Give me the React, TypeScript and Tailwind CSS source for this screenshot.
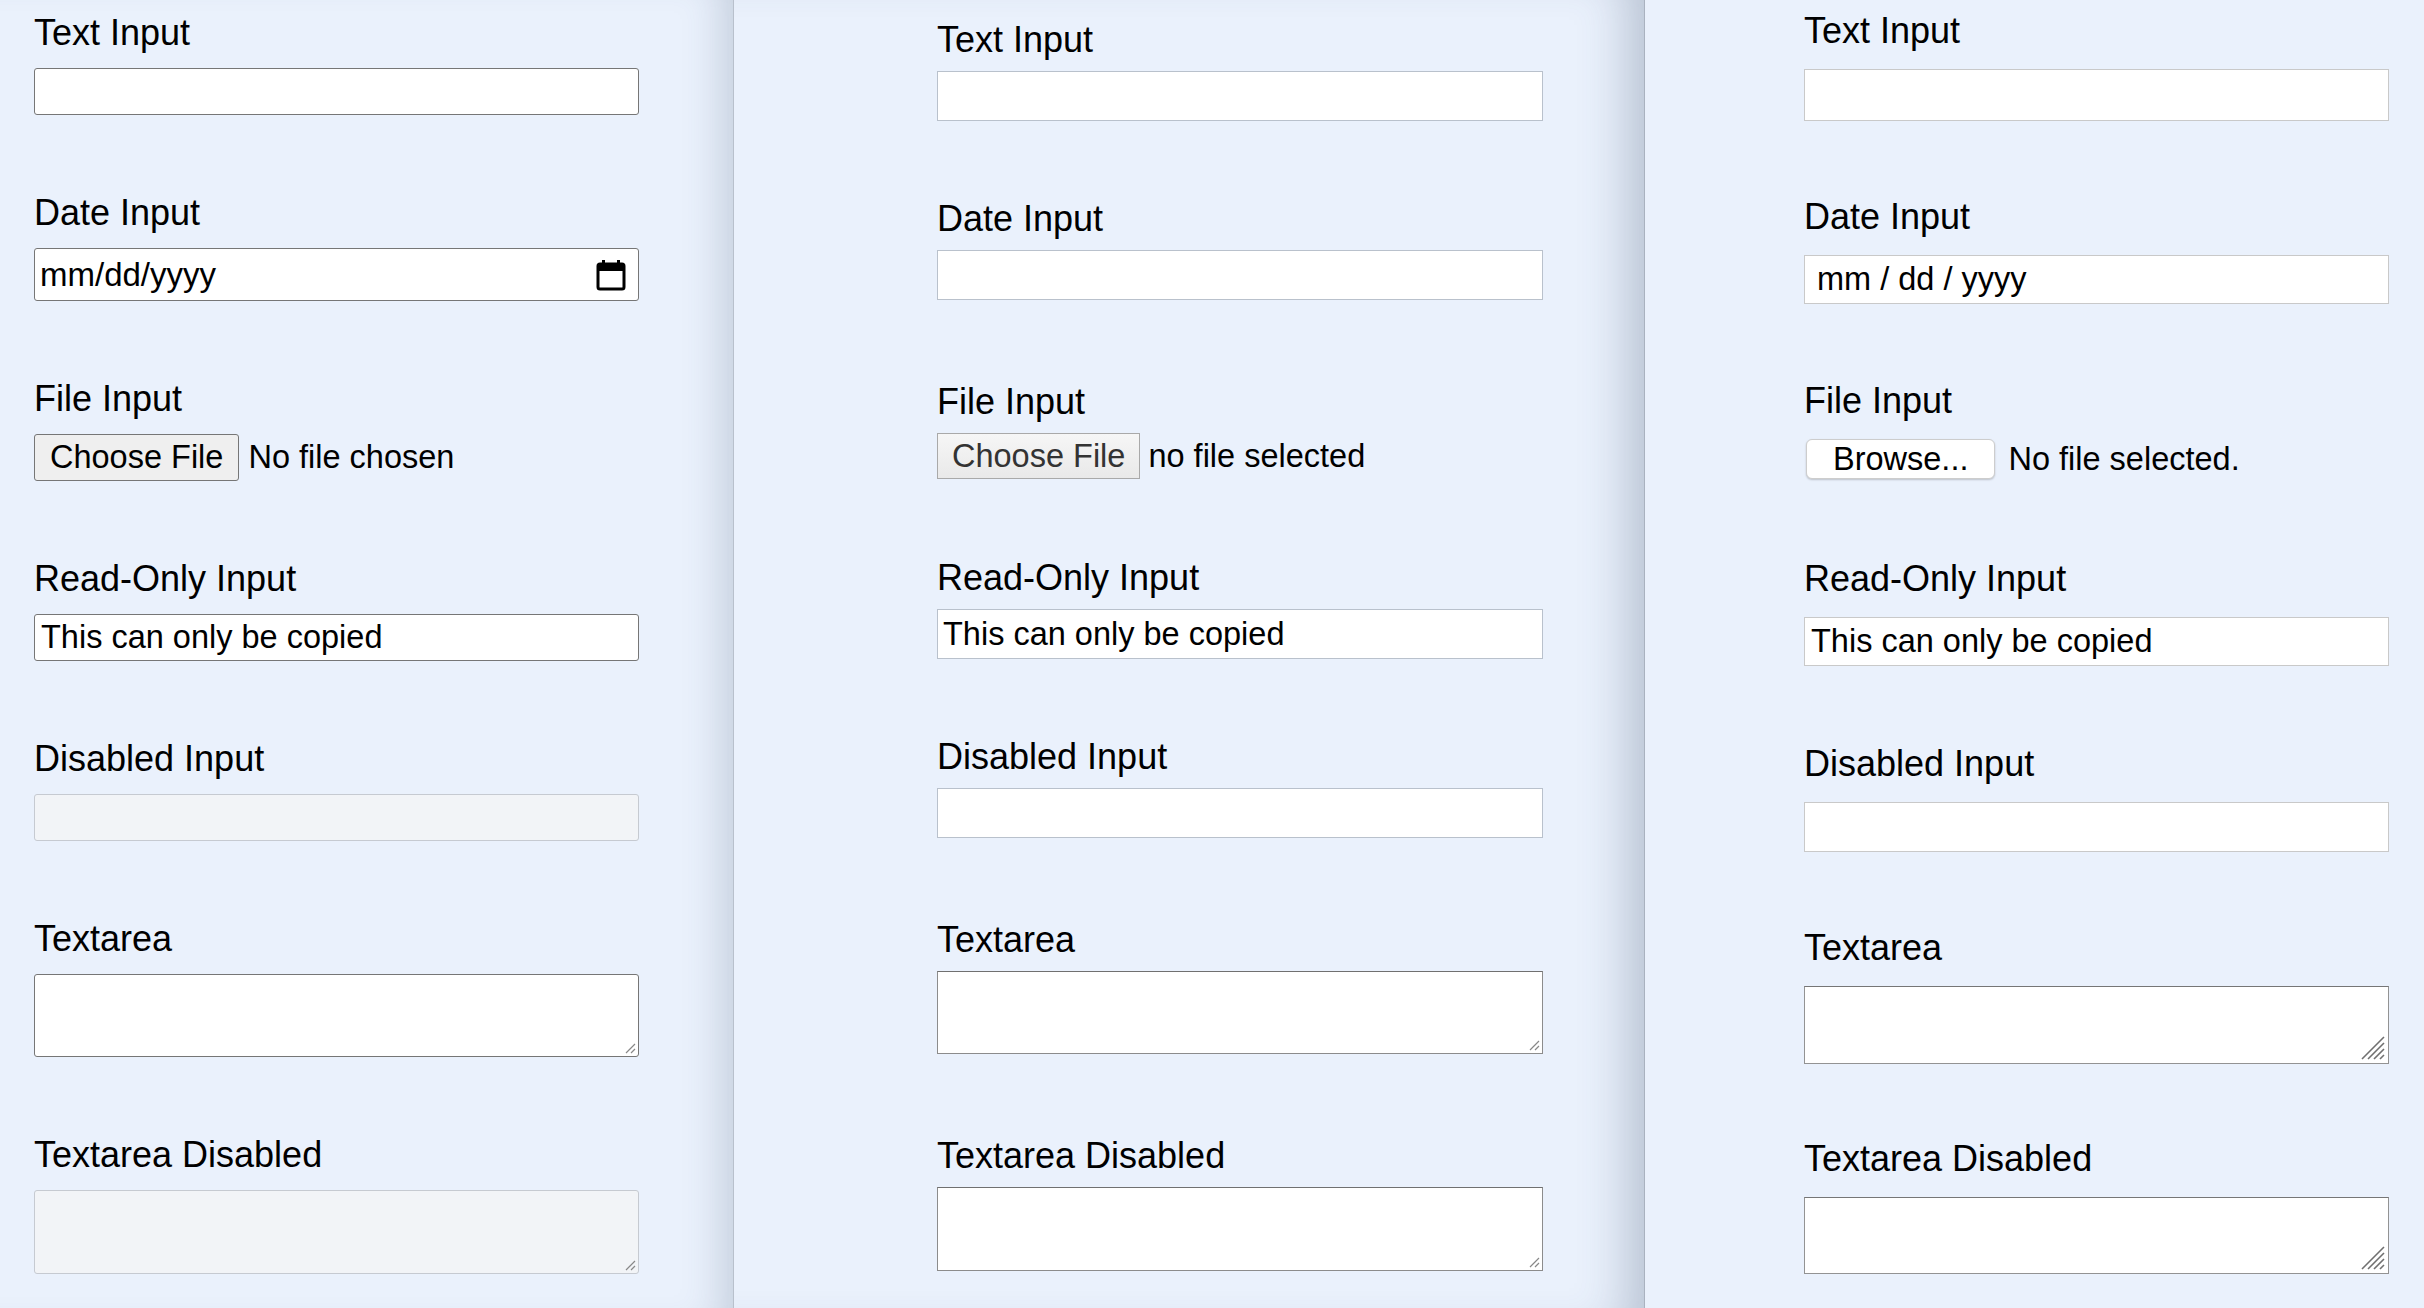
import React from "react";

const font = { fontFamily: '"Liberation Sans", Arial, sans-serif' };

function Label({ children, cls }: { children: React.ReactNode; cls: string }) {
  return <div className={"h-[40px] leading-[40px] text-[36px] text-black " + cls}>{children}</div>;
}

function Cal() {
  return (
    <svg width="30" height="32" viewBox="0 0 30 32" className="shrink-0">
      <rect x="2" y="5" width="26" height="25" rx="2" fill="none" stroke="#000" strokeWidth="3" />
      <rect x="2" y="5" width="26" height="7" fill="#000" />
      <rect x="6" y="1" width="3" height="6" fill="#000" />
      <rect x="21" y="1" width="3" height="6" fill="#000" />
    </svg>
  );
}

function Grip({ big }: { big?: boolean }) {
  return big ? (
    <svg width="26" height="26" viewBox="0 0 26 26" className="absolute right-[3px] bottom-[3px]">
      <path d="M25 3 L3 25 M25 9 L9 25 M25 15 L15 25 M25 21 L21 25" stroke="#707070" strokeWidth="1.6" />
    </svg>
  ) : (
    <svg width="14" height="14" viewBox="0 0 14 14" className="absolute right-[2px] bottom-[2px]">
      <path d="M13 4 L4 13 M13 9 L9 13" stroke="#888" strokeWidth="1.2" />
    </svg>
  );
}

function Col1() {
  const box = "w-[605px] bg-white border border-[#767676] rounded-[3px]";
  return (
    <div className="w-[734px] shrink-0 pl-[34px] pt-[13px] shadow-[inset_-40px_0_40px_-30px_rgba(60,80,110,0.22)] border-r border-[#b8c0cc]">
      <Label cls="mb-[15px]">Text Input</Label>
      <div className={box + " h-[47px]"} />
      <Label cls="mt-[78px] mb-[15px]">Date Input</Label>
      <div className={box + " h-[53px] flex items-center justify-between pl-[5px] pr-[12px] text-[33px]"}>
        <span>mm/dd/yyyy</span>
        <Cal />
      </div>
      <Label cls="mt-[78px] mb-[15px]">File Input</Label>
      <div className="h-[47px] flex items-center text-[32.5px]">
        <div className="h-[47px] px-[15px] flex items-center bg-[#efefef] border border-[#767676] rounded-[3px]">Choose File</div>
        <span className="ml-[9px]">No file chosen</span>
      </div>
      <Label cls="mt-[78px] mb-[15px]">Read-Only Input</Label>
      <div className={box + " h-[47px] flex items-center pl-[6px] text-[32.5px]"}>This can only be copied</div>
      <Label cls="mt-[78px] mb-[15px]">Disabled Input</Label>
      <div className="w-[605px] h-[47px] bg-[#f2f4f7] border border-[#c6cad1] rounded-[3px]" />
      <Label cls="mt-[78px] mb-[15px]">Textarea</Label>
      <div className={box + " h-[83px] relative"}><Grip /></div>
      <Label cls="mt-[78px] mb-[15px]">Textarea Disabled</Label>
      <div className="w-[605px] h-[84px] relative bg-[#f2f4f7] border border-[#c6cad1] rounded-[3px]"><Grip /></div>
    </div>
  );
}

function Col2() {
  const box = "w-[606px] bg-white border border-[#b9c1cc]";
  const ta = "w-[606px] bg-white border border-[#8c8c8c] border-t-[#707070] relative";
  return (
    <div className="w-[911px] shrink-0 pl-[203px] pt-[20px] shadow-[inset_-50px_0_50px_-35px_rgba(60,80,110,0.3)] border-r border-[#a9b2bf]">
      <Label cls="mb-[11px]">Text Input</Label>
      <div className={box + " h-[50px]"} />
      <Label cls="mt-[78px] mb-[11px]">Date Input</Label>
      <div className={box + " h-[50px]"} />
      <Label cls="mt-[82px] mb-[11px]">File Input</Label>
      <div className="h-[46px] flex items-center text-[32.5px]">
        <div className="h-[46px] px-[14px] flex items-center text-[#333] bg-linear-to-b from-[#f6f6f6] to-[#e9e9e9] border border-[#a9a9a9]">Choose File</div>
        <span className="ml-[8px]">no file selected</span>
      </div>
      <Label cls="mt-[79px] mb-[11px]">Read-Only Input</Label>
      <div className={box + " h-[50px] flex items-center pl-[5px] text-[32.5px]"}>This can only be copied</div>
      <Label cls="mt-[78px] mb-[11px]">Disabled Input</Label>
      <div className={box + " h-[50px]"} />
      <Label cls="mt-[82px] mb-[11px]">Textarea</Label>
      <div className={ta + " h-[83px]"}><Grip /></div>
      <Label cls="mt-[82px] mb-[11px]">Textarea Disabled</Label>
      <div className={ta + " h-[84px]"}><Grip /></div>
    </div>
  );
}

function Col3() {
  const box = "w-[585px] bg-white border border-[#c9c9c9]";
  const ta = "w-[585px] bg-white border border-[#939393] border-t-[#767676] relative";
  return (
    <div className="flex-1 pl-[159px] pt-[11px]">
      <Label cls="mb-[18px]">Text Input</Label>
      <div className={box + " h-[52px]"} />
      <Label cls="mt-[76px] mb-[18px]">Date Input</Label>
      <div className={box + " h-[49px] flex items-center pl-[12px] text-[32.5px]"}>mm / dd / yyyy</div>
      <Label cls="mt-[77px] mb-[18px]">File Input</Label>
      <div className="h-[40px] flex items-center text-[32.5px]">
        <div className="h-[40px] ml-[2px] px-[26px] flex items-center bg-white border border-[#cdcdcd] rounded-[6px] shadow-[0_1px_2px_rgba(0,0,0,0.2)]">Browse...</div>
        <span className="ml-[13px]">No file selected.</span>
      </div>
      <Label cls="mt-[80px] mb-[18px]">Read-Only Input</Label>
      <div className={box + " h-[49px] flex items-center pl-[6px] text-[32.5px]"}>This can only be copied</div>
      <Label cls="mt-[78px] mb-[18px]">Disabled Input</Label>
      <div className={box + " h-[50px]"} />
      <Label cls="mt-[76px] mb-[18px]">Textarea</Label>
      <div className={ta + " h-[78px]"}><Grip big /></div>
      <Label cls="mt-[75px] mb-[18px]">Textarea Disabled</Label>
      <div className={ta + " h-[77px]"}><Grip big /></div>
    </div>
  );
}

export default function App() {
  return (
    <div style={font} className="w-[2424px] h-[1308px] overflow-hidden bg-[#eaf1fc] flex text-black">
      <Col1 />
      <Col2 />
      <Col3 />
    </div>
  );
}
